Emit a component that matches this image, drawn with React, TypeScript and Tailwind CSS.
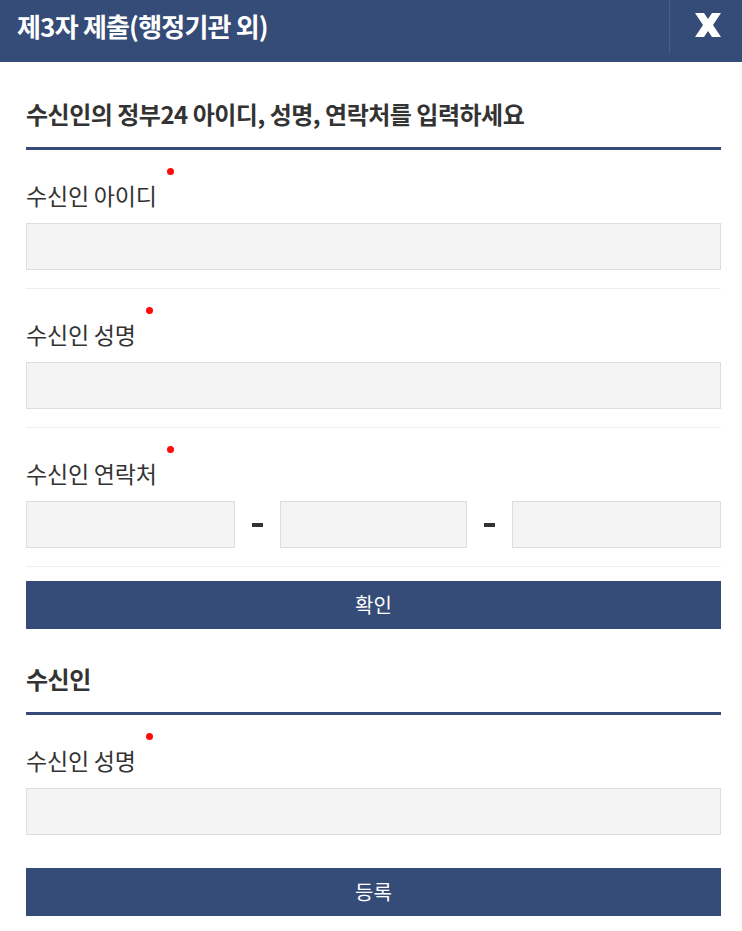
import React from "react";

const FONT = { fontFamily: '"Noto Sans CJK KR", "Noto Sans", sans-serif' };

function Label({ text }: { text: string }) {
  return (
    <div className="h-[36px] leading-[36px]">
      <span className="relative inline-block text-[23px] tracking-[-0.2px] text-[#333333]">
        {text}
        <span className="absolute left-[calc(100%+10px)] top-[-9px] h-[7px] w-[7px] rounded-full bg-[#ff0a0a]" />
      </span>
    </div>
  );
}

function Input({ className = "" }: { className?: string }) {
  return <div className={`h-[47px] border border-[#dddddd] bg-[#f4f4f4] ${className}`} />;
}

function Heading({ text, top }: { text: string; top: string }) {
  return (
    <div className={`${top} border-b-[3px] border-[#354c78] pb-[13px]`}>
      <div className="h-[40px] text-[24px] font-bold leading-[40px] tracking-[-0.5px] text-[#333333]">{text}</div>
    </div>
  );
}

export default function App() {
  return (
    <div className="w-[742px] bg-white" style={FONT}>
      <div className="flex h-[62px] items-start bg-[#354c78]">
        <div className="flex h-[50px] flex-1 items-center pl-[17px] text-[26px] font-bold tracking-[-0.8px] text-white">
          제3자 제출(행정기관 외)
        </div>
        <div className="h-[54px] w-px bg-[#4a5f88]" />
        <button className="flex h-[50px] w-[72px] items-center justify-center pl-[3px]">
          <svg width="26" height="24" viewBox="0 0 26 24">
            <polygon
              fill="#ffffff"
              points="0,0 9,0 13,6 17,0 26,0 18,12 26,24 17,24 13,18 9,24 0,24 8,12"
            />
          </svg>
        </button>
      </div>

      <div className="pl-[26px] pr-[21px]">
        <Heading text="수신인의 정부24 아이디, 성명, 연락처를 입력하세요" top="pt-[32px]" />

        <div className="border-b border-[#eeeeee] pt-[27px] pb-[18px]">
          <Label text="수신인 아이디" />
          <Input className="mt-[10px]" />
        </div>

        <div className="border-b border-[#eeeeee] pt-[27px] pb-[18px]">
          <Label text="수신인 성명" />
          <Input className="mt-[10px]" />
        </div>

        <div className="border-b border-[#eeeeee] pt-[27px] pb-[18px]">
          <Label text="수신인 연락처" />
          <div className="mt-[10px] flex items-center">
            <Input className="w-[209px]" />
            <div className="flex w-[45px] justify-center">
              <span className="block h-[4px] w-[11px] bg-[#333333]" />
            </div>
            <Input className="flex-1" />
            <div className="flex w-[45px] justify-center">
              <span className="block h-[4px] w-[11px] bg-[#333333]" />
            </div>
            <Input className="w-[209px]" />
          </div>
        </div>

        <button className="mt-[14px] flex h-[48px] w-full items-center justify-center bg-[#354c78] text-[20px] text-white">
          확인
        </button>

        <Heading text="수신인" top="pt-[30px]" />

        <div className="pt-[27px] pb-[18px]">
          <Label text="수신인 성명" />
          <Input className="mt-[10px]" />
        </div>

        <button className="mt-[15px] flex h-[48px] w-full items-center justify-center bg-[#354c78] text-[20px] text-white">
          등록
        </button>
      </div>
    </div>
  );
}
